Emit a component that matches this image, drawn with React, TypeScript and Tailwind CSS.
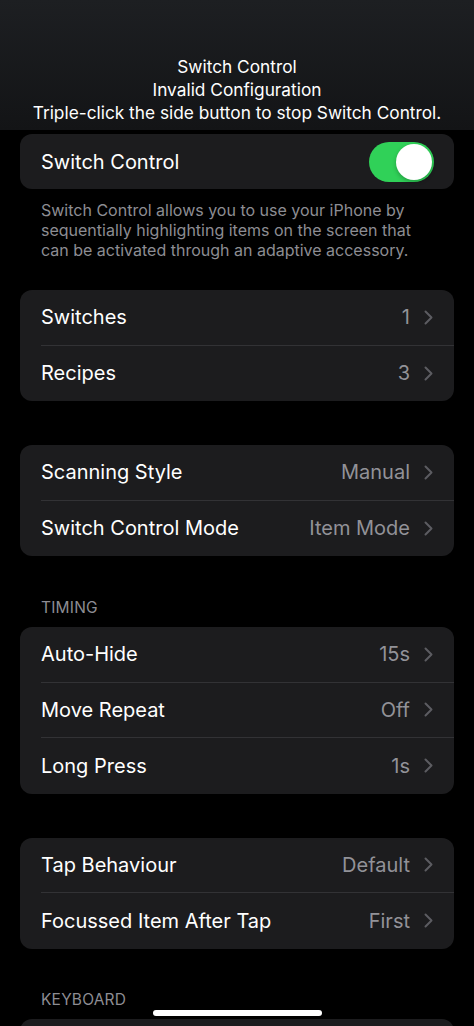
type Row = { label: string; value: string };

function Chevron() {
  return (
    <svg width="9" height="15" viewBox="0 0 9 15" className="ml-[14px] shrink-0">
      <path d="M1.5 1.5 L7.5 7.5 L1.5 13.5" fill="none" stroke="#5c5c61" strokeWidth="2" strokeLinecap="round" strokeLinejoin="round" />
    </svg>
  );
}

function Group({ rows }: { rows: Row[] }) {
  return (
    <div className="mx-5 overflow-hidden rounded-[12px] bg-[#1c1c1e]">
      {rows.map((r, i) => (
        <div key={r.label} className="pl-[21px]">
          <div className={"flex h-[55.5px] items-center pr-[21px] " + (i < rows.length - 1 ? "border-b border-[#323235]" : "")}>
            <span className="flex-1 text-[20px] text-white">{r.label}</span>
            <span className="text-[20px] text-[#929298]">{r.value}</span>
            <Chevron />
          </div>
        </div>
      ))}
    </div>
  );
}

function Header({ children }: { children: string }) {
  return <div className="h-[20px] px-[41px] text-[15.5px] leading-[20px] tracking-[0.2px] text-[#8d8d93]">{children}</div>;
}

export default function App() {
  return (
    <div className="relative h-[1026px] w-[474px] overflow-hidden bg-black font-['Inter','Noto_Sans',sans-serif]">
      <div className="flex h-[130px] flex-col items-center justify-end bg-gradient-to-b from-[#1d1f22] to-[#131416] pb-[6px] text-[17.3px] leading-[23px] text-white">
        <div>Switch Control</div>
        <div>Invalid Configuration</div>
        <div>Triple-click the side button to stop Switch Control.</div>
      </div>

      <div className="mx-5 mt-[4px] flex h-[55px] items-center rounded-[12px] bg-[#1c1c1e] pl-[21px] pr-[20px]">
        <span className="flex-1 text-[20px] text-white">Switch Control</span>
        <div className="flex h-[40px] w-[65px] items-center justify-end rounded-full bg-[#30d158] pr-[2px]">
          <div className="h-[36px] w-[36px] rounded-full bg-white shadow-[0_2px_4px_rgba(0,0,0,0.25)]" />
        </div>
      </div>

      <p className="mt-[11px] pl-[41px] pr-[52px] text-[16px] leading-[20px] text-[#8d8d93]">
        Switch Control allows you to use your iPhone by sequentially highlighting items on the screen that can be activated through an adaptive accessory.
      </p>

      <div className="mt-[30px]">
        <Group rows={[{ label: "Switches", value: "1" }, { label: "Recipes", value: "3" }]} />
      </div>

      <div className="mt-[44px]">
        <Group rows={[{ label: "Scanning Style", value: "Manual" }, { label: "Switch Control Mode", value: "Item Mode" }]} />
      </div>

      <div className="mt-[42px]">
        <Header>TIMING</Header>
      </div>
      <div className="mt-[9px]">
        <Group
          rows={[
            { label: "Auto-Hide", value: "15s" },
            { label: "Move Repeat", value: "Off" },
            { label: "Long Press", value: "1s" },
          ]}
        />
      </div>

      <div className="mt-[44px]">
        <Group rows={[{ label: "Tap Behaviour", value: "Default" }, { label: "Focussed Item After Tap", value: "First" }]} />
      </div>

      <div className="mt-[41px]">
        <Header>KEYBOARD</Header>
      </div>
      <div className="mx-5 mt-[9px] h-[55px] rounded-[12px] bg-[#1c1c1e]" />

      <div className="absolute bottom-[10px] left-[153px] h-[6px] w-[169px] rounded-full bg-white" />
    </div>
  );
}
